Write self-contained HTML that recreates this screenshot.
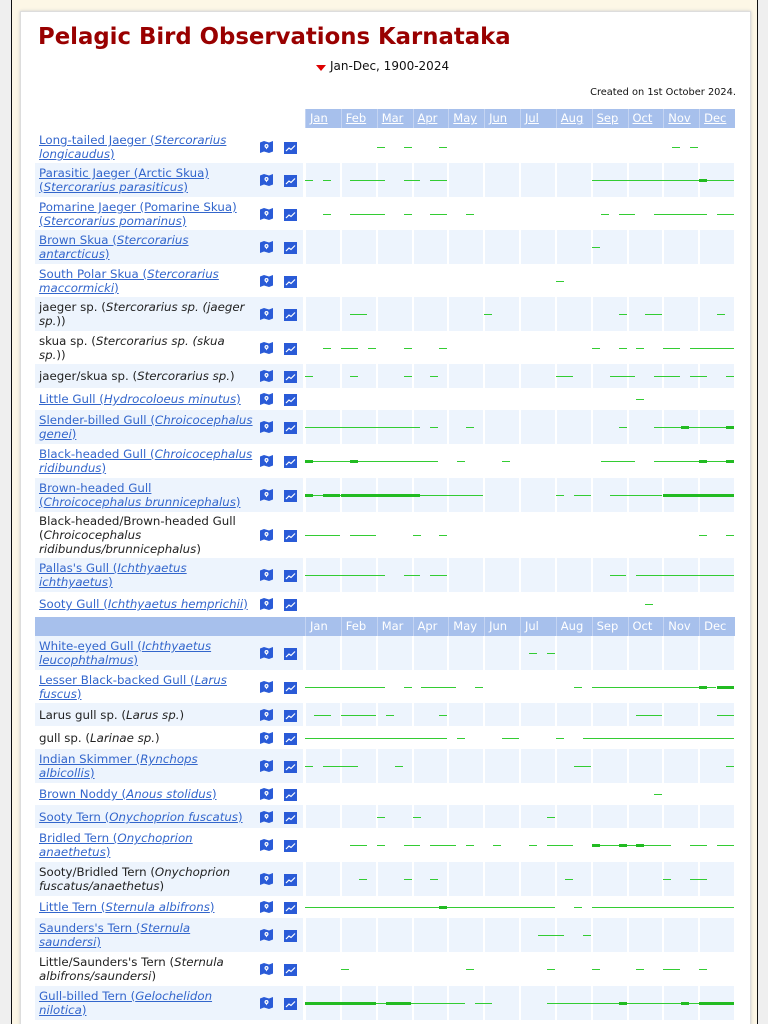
<!DOCTYPE html>
<html><head><meta charset="utf-8">
<style>
*{margin:0;padding:0;box-sizing:border-box}
html,body{width:768px;height:1024px;overflow:hidden}
body{background:#efefef;font-family:"DejaVu Sans","Liberation Sans",sans-serif;font-size:11.8px;color:#222;position:relative}
#cream{position:absolute;left:11px;top:0;width:747px;height:1024px;background:#fdf7e6;border-left:1px solid #111;border-right:1px solid #111}
#panel{position:absolute;left:20px;top:11px;width:731px;height:1020px;background:#fff;border:1px solid #ddd;box-shadow:0 0 3px #ccc}
h1{position:absolute;left:38px;top:24px;font-family:"DejaVu Sans",sans-serif;font-weight:bold;font-size:22.8px;color:#990000;white-space:nowrap}
.range{position:absolute;left:316px;top:59px;font-size:12px;color:#111}
.range i{display:inline-block;width:0;height:0;border-left:5px solid transparent;border-right:5px solid transparent;border-top:6px solid #d00;margin-right:4px;vertical-align:-1px}
.created{position:absolute;right:32px;top:87px;font-size:9.8px;color:#111}
.hdr{position:absolute;height:19px;background:#a7c0ec}
.mc{position:absolute;top:0;height:19px;width:35px;border-left:1px solid #c4d4f2;color:#fff;font-size:11.5px;padding-left:4px;line-height:19px}
.hdr.u .mc{text-decoration:underline}
.row{position:absolute;left:35px;width:700px}
.row.s{background:#edf4fd}
.name{position:absolute;left:4px;white-space:nowrap;line-height:14px}
a{color:#3366cc;text-decoration:underline}
.ic{position:absolute;width:13px;height:12px}
.sep{position:absolute;top:0;bottom:0;width:2px;background:#fff}
.d{position:absolute;background:#33cc33;height:1px}
.d.t{height:3px;background:#22bb22}
</style></head><body>
<div id="cream"></div>
<div id="panel"></div>
<h1>Pelagic Bird Observations Karnataka</h1>
<div class="range"><i></i>Jan-Dec, 1900-2024</div>
<div class="created">Created on 1st October 2024.</div>
<div id="rows"></div>
<script>
var rows=[
[130,33,0,'<a href="#">Long-tailed Jaeger (<i>Stercorarius</i><br><i>longicaudus</i>)</a>',[[8],[11],[15],[41],[43]]],
[163,34,1,'<a href="#">Parasitic Jaeger (Arctic Skua)<br>(<i>Stercorarius parasiticus</i>)</a>',[[0],[2],[5,8],[11,12],[14,15],[32,47],[44,44,1]]],
[197,33,0,'<a href="#">Pomarine Jaeger (Pomarine Skua)<br>(<i>Stercorarius pomarinus</i>)</a>',[[2],[5,8],[11],[14,15],[18],[33],[35,36],[39,44],[46,47]]],
[230,34,1,'<a href="#">Brown Skua (<i>Stercorarius</i><br><i>antarcticus</i>)</a>',[[32]]],
[264,33,0,'<a href="#">South Polar Skua (<i>Stercorarius</i><br><i>maccormicki</i>)</a>',[[28]]],
[297,34,1,'jaeger sp. (<i>Stercorarius sp. (jaeger</i><br><i>sp.</i>))',[[5,6],[20],[35],[38,39],[46]]],
[331,33,0,'skua sp. (<i>Stercorarius sp. (skua</i><br><i>sp.</i>))',[[2],[4,5],[7],[11],[15],[32],[35],[37],[40,41],[43,47]]],
[364,24,1,'jaeger/skua sp. (<i>Stercorarius sp.</i>)',[[0],[5],[11],[14],[28,29],[34,36],[39,41],[43,44],[47]]],
[388,22,0,'<a href="#">Little Gull (<i>Hydrocoloeus minutus</i>)</a>',[[37]]],
[410,34,1,'<a href="#">Slender-billed Gull (<i>Chroicocephalus</i><br><i>genei</i>)</a>',[[0,12],[14],[18],[35],[39,47],[42,42,1],[47,47,1]]],
[444,34,0,'<a href="#">Black-headed Gull (<i>Chroicocephalus</i><br><i>ridibundus</i>)</a>',[[0,14],[0,0,1],[5,5,1],[17],[22],[33,36],[39,47],[44,44,1],[47,47,1]]],
[478,34,1,'<a href="#">Brown-headed Gull<br>(<i>Chroicocephalus brunnicephalus</i>)</a>',[[0,19],[0,0,1],[2,3,1],[4,12,1],[28],[30,31],[34,39],[40,47,1]]],
[512,46,0,'Black-headed/Brown-headed Gull<br>(<i>Chroicocephalus</i><br><i>ridibundus/brunnicephalus</i>)',[[0,3],[5,7],[12],[15],[44],[47]]],
[558,34,1,'<a href="#">Pallas\'s Gull (<i>Ichthyaetus</i><br><i>ichthyaetus</i>)</a>',[[0,8],[11,12],[14,15],[34,35],[37,47]]],
[592,23,0,'<a href="#">Sooty Gull (<i>Ichthyaetus hemprichii</i>)</a>',[[38]]],
[636,34,1,'<a href="#">White-eyed Gull (<i>Ichthyaetus</i><br><i>leucophthalmus</i>)</a>',[[25],[27]]],
[670,33,0,'<a href="#">Lesser Black-backed Gull (<i>Larus</i><br><i>fuscus</i>)</a>',[[0,8],[11],[13,16],[19],[30],[32,45],[44,44,1],[46,47,1]]],
[703,23,1,'Larus gull sp. (<i>Larus sp.</i>)',[[1,2],[4,7],[9],[15],[37,39],[46,47]]],
[726,23,0,'gull sp. (<i>Larinae sp.</i>)',[[0,15],[17],[22,23],[28],[31,47]]],
[749,34,1,'<a href="#">Indian Skimmer (<i>Rynchops</i><br><i>albicollis</i>)</a>',[[0],[2,5],[10],[30,31],[47]]],
[783,22,0,'<a href="#">Brown Noddy (<i>Anous stolidus</i>)</a>',[[39]]],
[805,23,1,'<a href="#">Sooty Tern (<i>Onychoprion fuscatus</i>)</a>',[[8],[12],[27]]],
[828,34,0,'<a href="#">Bridled Tern (<i>Onychoprion</i><br><i>anaethetus</i>)</a>',[[5,6],[8],[11,12],[14,16],[18],[21],[25],[27,29],[32,40],[32,32,1],[35,35,1],[37,37,1],[43,44],[46,47]]],
[862,34,1,'Sooty/Bridled Tern (<i>Onychoprion</i><br><i>fuscatus/anaethetus</i>)',[[6],[11],[14],[29],[40],[43,44]]],
[896,22,0,'<a href="#">Little Tern (<i>Sternula albifrons</i>)</a>',[[0,27],[15,15,1],[30],[32,47]]],
[918,34,1,'<a href="#">Saunders\'s Tern (<i>Sternula</i><br><i>saundersi</i>)</a>',[[26,28],[31]]],
[952,34,0,'Little/Saunders\'s Tern (<i>Sternula</i><br><i>albifrons/saundersi</i>)',[[4],[18],[27],[32],[37],[40,41],[44]]],
[986,34,1,'<a href="#">Gull-billed Tern (<i>Gelochelidon</i><br><i>nilotica</i>)</a>',[[0,17],[0,7,1],[9,11,1],[19,20],[27,47],[35,35,1],[42,42,1],[44,47,1]]]
];
var months=['Jan','Feb','Mar','Apr','May','Jun','Jul','Aug','Sep','Oct','Nov','Dec'];
var W=35.83,X0=305,WK=W/4;
var mapSvg='<svg class="ic" viewBox="0 0 13 12"><path d="M0 1.5 L4 0 L9 1.5 L13 0 V10.5 L9 12 L4 10.5 L0 12Z" fill="#2a5bd7"/><circle cx="6.5" cy="5" r="2" fill="#fff"/><path d="M5 5.5 L6.5 8.5 L8 5.5Z" fill="#fff"/><circle cx="6.5" cy="5" r="0.8" fill="#2a5bd7"/></svg>';
var chSvg='<svg class="ic" viewBox="0 0 13 12"><rect x="0" y="0" width="13" height="12" fill="#2a5bd7"/><path d="M2 9 L5 6 L7 7.5 L11 3.5" stroke="#fff" stroke-width="1.2" fill="none"/></svg>';
var h='';
function hdr(top,left,u){
  var s='<div class="hdr'+(u?' u':'')+'" style="top:'+top+'px;left:'+left+'px;width:'+(735-left)+'px">';
  for(var m=0;m<12;m++){s+='<div class="mc" style="left:'+(X0-left+m*W).toFixed(1)+'px">'+months[m]+'</div>';}
  return s+'</div>';
}
h+=hdr(109,305,1);
h+=hdr(617,35,0);
rows.forEach(function(r){
  var top=r[0],ht=r[1];
  var s='<div class="row'+(r[2]?' s':'')+'" style="top:'+top+'px;height:'+ht+'px">';
  if(r[2]){for(var m=0;m<=12;m++){s+='<div class="sep" style="left:'+(X0-35+m*W-1).toFixed(1)+'px"></div>';}
    s+='<div class="sep" style="left:268px"></div>';}
  var lines=(r[3].match(/<br>/g)||[]).length+1;
  s+='<div class="name" style="top:'+((ht-lines*14)/2).toFixed(0)+'px">'+r[3]+'</div>';
  var cy=Math.round(ht/2);
  s+='<div style="position:absolute;left:225px;top:'+(cy-6)+'px">'+mapSvg+'</div>';
  s+='<div style="position:absolute;left:249px;top:'+(cy-5)+'px">'+chSvg+'</div>';
  r[4].forEach(function(d){
    var a=d[0],b=(d.length>1?d[1]:d[0]),t=d[2];
    var x=X0-35+a*WK, w=(b-a+1)*WK-1;
    s+='<div class="d'+(t?' t':'')+'" style="left:'+x.toFixed(1)+'px;width:'+w.toFixed(1)+'px;top:'+(cy-(t?1:0))+'px"></div>';
  });
  s+='</div>';
  h+=s;
});
document.getElementById('rows').innerHTML=h;
</script>
</body></html>
